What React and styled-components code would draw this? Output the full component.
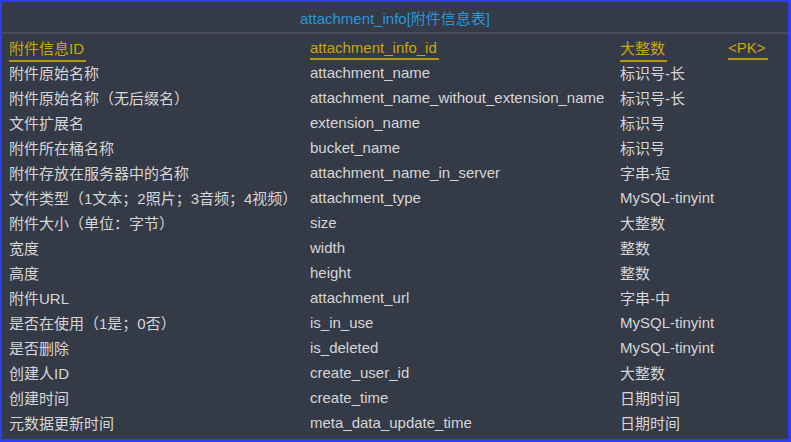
import React from "react";
import styled, { createGlobalStyle } from "styled-components";

const GlobalStyle = createGlobalStyle`
  html, body {
    margin: 0;
    padding: 0;
    background: #ffffff;
  }
  body {
    font-family: "Liberation Sans", Arial, "Noto Sans CJK SC", sans-serif;
  }
`;

const Frame = styled.div`
  width: 791px;
  height: 442px;
  box-sizing: border-box;
  background-color: #353a47;
  border-style: solid;
  border-color: #2b3ef0;
  border-width: 2px 3px 3px 2px;
  display: flex;
  flex-direction: column;
`;

const Title = styled.div`
  height: 30px;
  display: flex;
  align-items: center;
  justify-content: center;
  color: #2b96d8;
  font-size: 15px;
  border-bottom: 2px solid #474c58;
`;

const Table = styled.div`
  display: grid;
  grid-template-columns: 301px 310px 108px 1fr;
  grid-auto-rows: 25px;
  padding: 1px 0 0 7px;
`;

const Cell = styled.div`
  display: flex;
  align-items: center;
  font-size: 15px;
  color: ${(p) => (p.$key ? "#c9a70f" : "#d6d6d6")};
  white-space: nowrap;
`;

const Key = styled.span`
  display: inline-block;
  padding: 0 2px 2px 0;
  margin-top: 3px;
  border-bottom: 2px solid #b39616;
`;

const rows = [
  ["附件信息ID", "attachment_info_id", "大整数", "<PK>"],
  ["附件原始名称", "attachment_name", "标识号-长"],
  ["附件原始名称（无后缀名）", "attachment_name_without_extension_name", "标识号-长"],
  ["文件扩展名", "extension_name", "标识号"],
  ["附件所在桶名称", "bucket_name", "标识号"],
  ["附件存放在服务器中的名称", "attachment_name_in_server", "字串-短"],
  ["文件类型（1文本；2照片；3音频；4视频）", "attachment_type", "MySQL-tinyint"],
  ["附件大小（单位：字节）", "size", "大整数"],
  ["宽度", "width", "整数"],
  ["高度", "height", "整数"],
  ["附件URL", "attachment_url", "字串-中"],
  ["是否在使用（1是；0否）", "is_in_use", "MySQL-tinyint"],
  ["是否删除", "is_deleted", "MySQL-tinyint"],
  ["创建人ID", "create_user_id", "大整数"],
  ["创建时间", "create_time", "日期时间"],
  ["元数据更新时间", "meta_data_update_time", "日期时间"],
];

const App = () => {
  return (
    <>
      <GlobalStyle />
      <Frame>
        <Title>attachment_info[附件信息表]</Title>
        <Table>
          {rows.map((row, i) =>
            [0, 1, 2, 3].map((c) => {
              const text = row[c] || "";
              const isKey = i === 0;
              return (
                <Cell key={`${i}-${c}`} $key={isKey}>
                  {isKey && text ? <Key>{text}</Key> : text}
                </Cell>
              );
            })
          )}
        </Table>
      </Frame>
    </>
  );
};

export default App;
